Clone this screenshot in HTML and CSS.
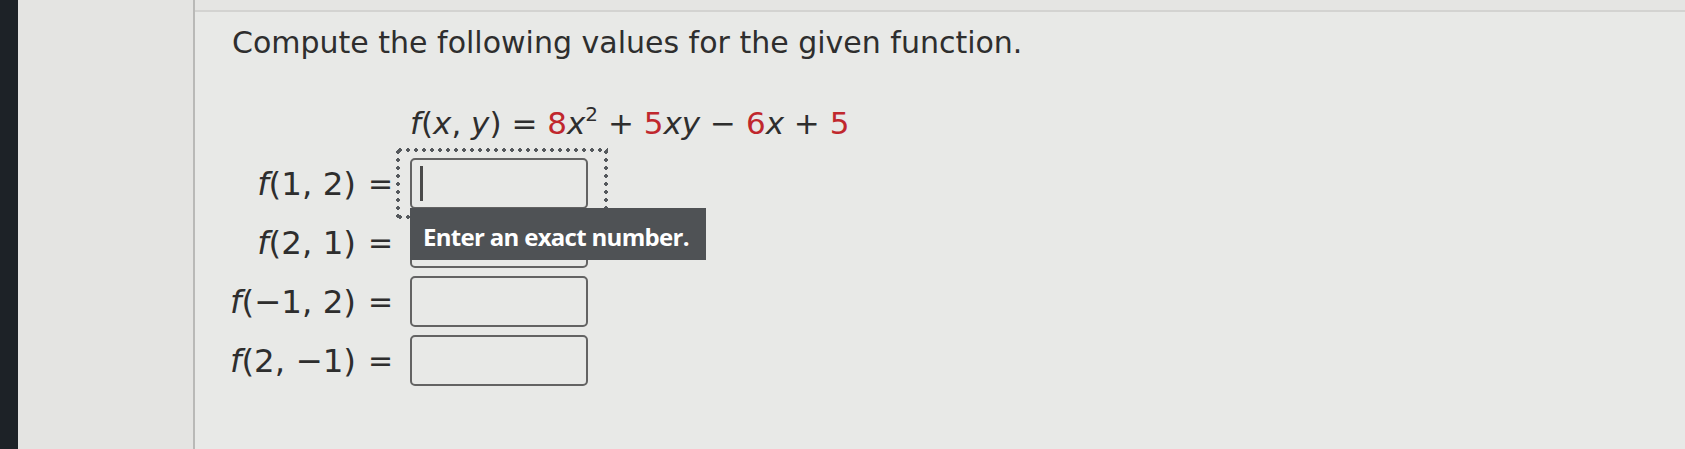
FILE: index.html
```html
<!DOCTYPE html>
<html>
<head>
<meta charset="utf-8">
<link rel="stylesheet" href="styles.css">
</head>
<body>
<div class="screen">
  <div class="edge"></div>
  <div class="side"></div>
  <div class="main">
    <div class="topbar"></div>
    <h1 class="title">Compute the following values for the given function.</h1>
    <div class="grid">
      <div class="label"></div>
      <div class="eq"></div>
      <div class="equation"><i>f</i>(<i>x</i>, <i>y</i>) = <span class="red">8</span><i>x</i><sup>2</sup> + <span class="red">5</span><i>xy</i> − <span class="red">6</span><i>x</i> + <span class="red">5</span></div>

      <div class="label"><i>f</i>(1, 2)</div>
      <div class="eq">=</div>
      <div class="cell focus">
        <div class="box"><span class="caret"></span></div>
        <div class="tip">Enter an exact number.</div>
      </div>

      <div class="label"><i>f</i>(2, 1)</div>
      <div class="eq">=</div>
      <div class="cell"><div class="box"></div></div>

      <div class="label"><i>f</i>(−1, 2)</div>
      <div class="eq">=</div>
      <div class="cell"><div class="box"></div></div>

      <div class="label"><i>f</i>(2, −1)</div>
      <div class="eq">=</div>
      <div class="cell"><div class="box"></div></div>
    </div>
  </div>
</div>
</body>
</html>
```
FILE: styles.css
```css
html, body {
  margin: 0;
  padding: 0;
  background: #e8e8e6;
}
.screen {
  display: flex;
  width: 1685px;
  height: 449px;
  overflow: hidden;
}
.edge {
  width: 18px;
  background: #1d2227;
  flex: none;
}
.side {
  width: 175px;
  flex: none;
  background: #e4e4e2;
  border-right: 2px solid #b9b9b7;
}
.main {
  flex: 1;
  position: relative;
  background: #e8e9e7;
  padding-left: 37px;
}
.topbar {
  height: 10px;
  border-bottom: 2px solid #d3d3d1;
  margin-left: -37px;
  background: #e5e5e3;
}
.title {
  margin: 13px 0 0 0;
  font-family: "DejaVu Sans", Verdana, sans-serif;
  font-weight: normal;
  font-size: 30px;
  line-height: 36px;
  color: #2e2e2e;
}
.grid {
  margin-top: 45px;
  margin-left: -7px;
  display: grid;
  grid-template-columns: 131px 54px 180px;
  row-gap: 8px;
  font-family: "DejaVu Sans", Verdana, sans-serif;
  font-size: 32.5px;
  line-height: 34px;
  color: #2e2e2e;
  align-items: center;
}
.label {
  text-align: right;
  white-space: nowrap;
}
.eq {
  padding-left: 12px;
  font-size: 30px;
}
.equation {
  white-space: nowrap;
  margin-bottom: 10px;
  font-size: 31px;
}
.equation sup {
  font-size: 20px;
  line-height: 0;
  vertical-align: 13px;
}
.red {
  color: #c0272d;
}
.cell {
  position: relative;
}
.box {
  height: 47px;
  width: 174px;
  border: 2px solid #636363;
  border-radius: 5px;
  position: relative;
}
.focus::before {
  content: "";
  position: absolute;
  left: -14px;
  right: -18px;
  top: -10px;
  bottom: -10px;
  background:
    radial-gradient(circle, #55595d 1.6px, transparent 2.1px) left top / 8px 4px repeat-x,
    radial-gradient(circle, #55595d 1.6px, transparent 2.1px) left bottom / 8px 4px repeat-x,
    radial-gradient(circle, #55595d 1.6px, transparent 2.1px) left top / 4px 8px repeat-y,
    radial-gradient(circle, #55595d 1.6px, transparent 2.1px) right top / 4px 8px repeat-y;
}
.caret {
  position: absolute;
  left: 8px;
  top: 6px;
  width: 3px;
  height: 35px;
  background: #4a4a4a;
}
.tip {
  position: absolute;
  left: 0;
  top: 50px;
  width: 296px;
  height: 52px;
  box-sizing: border-box;
  background: #4f5255;
  color: #fff;
  font-family: "Open Sans", "DejaVu Sans", sans-serif;
  font-weight: 700;
  font-size: 24px;
  letter-spacing: -0.7px;
  line-height: 46px;
  padding: 6px 0 0 13px;
  white-space: nowrap;
  z-index: 2;
}
```
